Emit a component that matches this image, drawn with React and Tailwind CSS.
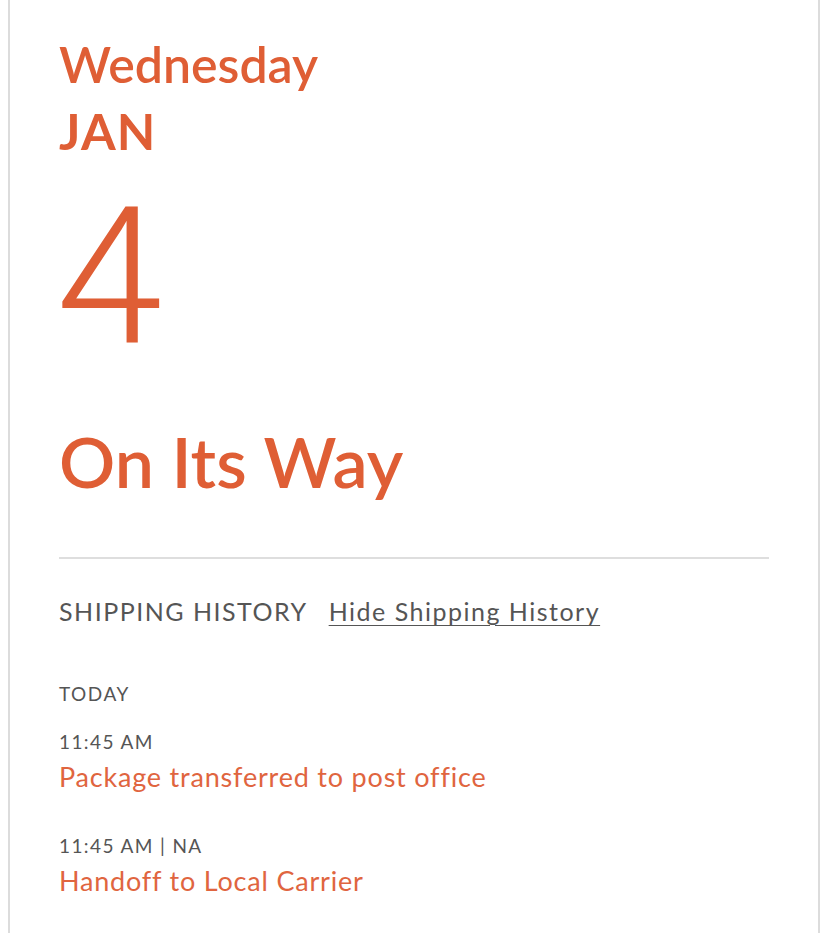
import React from "react";

const events = [
  { time: "11:45 AM", text: "Package transferred to post office" },
  { time: "11:45 AM | NA", text: "Handoff to Local Carrier" },
];

const ShippingStatus = () => {
  return (
    <div className="min-h-screen bg-white font-['Lato',sans-serif]">
      <div className="mx-2 min-h-screen border-x-2 border-[#dcdcdc] px-[49px] pt-[31px] pb-10">
        <div className="text-[50px] leading-[67px] font-semibold text-[#df5e35]">Wednesday</div>
        <div className="text-[50px] leading-[67px] font-bold tracking-[1px] text-[#df5e35]">JAN</div>
        <div className="mt-3 -ml-[3px] h-[200px] font-['Roboto',sans-serif] text-[192px] leading-[200px] font-light text-[#df5e35]">
          4
        </div>
        <h1 className="mt-[42px] text-[70px] leading-[84px] font-semibold text-[#df5e35]">On Its Way</h1>

        <hr className="mt-[54px] border-t-2 border-[#dedede]" />

        <div className="mt-[36px] flex items-baseline gap-[21px] text-[25px] leading-[32px] tracking-[1.5px] text-[#555]">
          <span>SHIPPING HISTORY</span>
          <a href="#" className="underline underline-offset-[4px] decoration-1">
            Hide Shipping History
          </a>
        </div>

        <div className="mt-[55px] text-[19px] leading-[24px] tracking-[1.5px] text-[#555]">TODAY</div>

        {events.map((e, i) => (
          <div key={i} className={i === 0 ? "mt-[24px]" : "mt-[41px]"}>
            <div className="text-[19px] leading-[24px] tracking-[1.4px] text-[#555]">{e.time}</div>
            <div className="mt-[7px] text-[27px] leading-[32px] tracking-[0.8px] text-[#e0653f]">{e.text}</div>
          </div>
        ))}
      </div>
    </div>
  );
};

export default ShippingStatus;
